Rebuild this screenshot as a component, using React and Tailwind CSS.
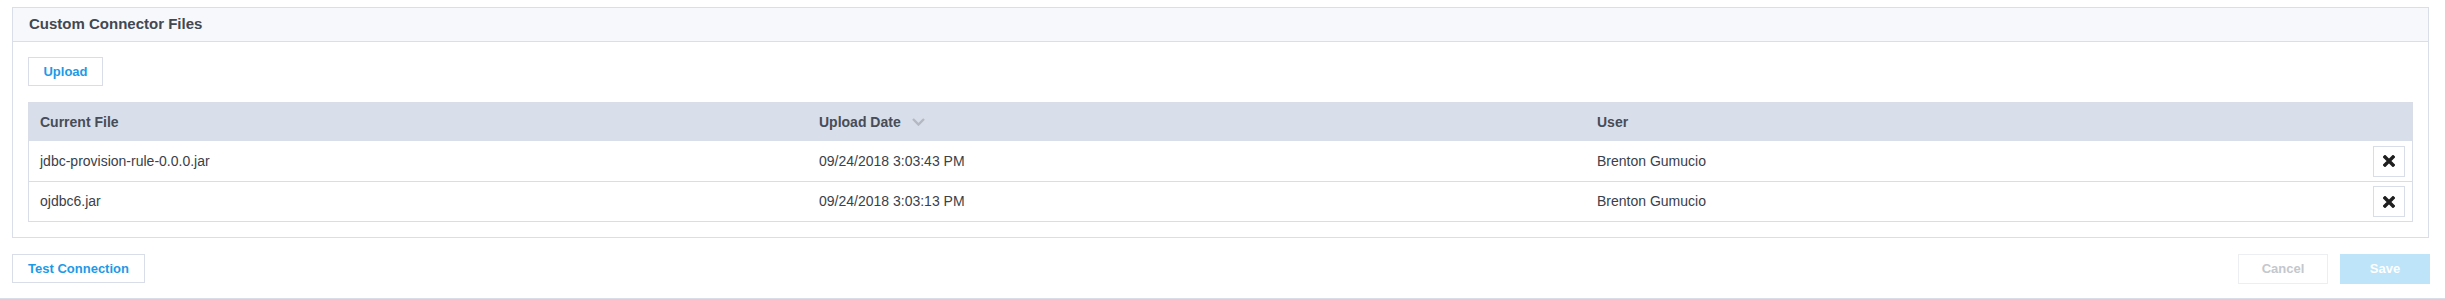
import React from "react";

const font = { fontFamily: '"Liberation Sans", Arial, sans-serif' };

function XIcon() {
  return (
    <svg width="12" height="12" viewBox="0 0 12 12">
      <path d="M2 2 L10 10 M10 2 L2 10" stroke="#1f1f1f" strokeWidth="3.4" strokeLinecap="square" />
    </svg>
  );
}

function Chevron() {
  return (
    <svg width="13" height="8" viewBox="0 0 13 8" className="ml-[11px]">
      <path d="M1 1 L6.5 6.5 L12 1" stroke="#b4b8c0" strokeWidth="2.4" fill="none" />
    </svg>
  );
}

const rows = [
  ["jdbc-provision-rule-0.0.0.jar", "09/24/2018 3:03:43 PM", "Brenton Gumucio"],
  ["ojdbc6.jar", "09/24/2018 3:03:13 PM", "Brenton Gumucio"],
];

export default function App() {
  return (
    <div className="w-[2445px] h-[299px] bg-white text-[#3b4049]" style={font}>
      <div className="pl-[12px] pr-[16px] pt-[7px]">
        <div className="border border-[#dadee8]">
          <div className="h-[34px] bg-[#f7f8fb] border-b border-[#dadee8] flex items-center pl-[16px]">
            <span className="text-[15px] font-bold text-[#424852]">Custom Connector Files</span>
          </div>
          <div className="px-[15px] pt-[15px] pb-[15px]">
            <button className="w-[75px] h-[29px] border border-[#d9dde8] text-[#1d9ae6] text-[13px] font-bold bg-white">
              Upload
            </button>
            <div className="mt-[16px] border border-[#d9dde8]">
              <div className="grid grid-cols-[779px_778px_779px_1fr] h-[38px] bg-[#d8deea] items-center text-[14px] font-bold text-[#474c56]">
                <div className="pl-[11px]">Current File</div>
                <div className="pl-[11px] flex items-center">Upload Date<Chevron /></div>
                <div className="pl-[11px]">User</div>
                <div />
              </div>
              {rows.map((r, i) => (
                <div
                  key={i}
                  className={"grid grid-cols-[779px_778px_779px_1fr] h-[40px] items-center text-[14px] text-[#3b4049] " + (i > 0 ? "border-t border-[#d9dde8]" : "")}
                >
                  <div className="pl-[11px]">{r[0]}</div>
                  <div className="pl-[11px]">{r[1]}</div>
                  <div className="pl-[11px]">{r[2]}</div>
                  <div className="flex justify-end pr-[7px]">
                    <button className="w-[32px] h-[31px] border border-[#d9dde8] bg-white flex items-center justify-center">
                      <XIcon />
                    </button>
                  </div>
                </div>
              ))}
            </div>
          </div>
        </div>
        <div className="flex items-center justify-between mt-[16px] h-[29px]">
          <button className="w-[133px] h-[29px] border border-[#d9dde8] text-[#1d9ae6] text-[13px] font-bold bg-white">
            Test Connection
          </button>
          <div className="flex gap-[12px] mr-[-1px]">
            <button className="w-[90px] h-[30px] border border-[#eceef2] text-[#c4c7cd] text-[13px] font-bold bg-white">
              Cancel
            </button>
            <button className="w-[90px] h-[30px] bg-[#bde4f8] text-white text-[13px] font-bold">
              Save
            </button>
          </div>
        </div>
      </div>
      <div className="mt-[15px] border-b border-[#d9dde8]" />
    </div>
  );
}
